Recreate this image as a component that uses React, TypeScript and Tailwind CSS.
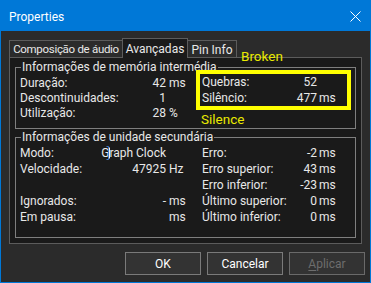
import React from "react";

function LRow({ label, value, unit, h = "h-[16px]" }: { label: string; value: string; unit?: string; h?: string }) {
  return (
    <div className={`flex items-center ${h}`}>
      <div className="flex w-[146px] justify-between">
        <span>{label}</span>
        <span>{value}</span>
      </div>
      {unit !== undefined && <span className="ml-[3px]">{unit}</span>}
    </div>
  );
}

function RRow({ label, value, unit, h = "h-[16px]" }: { label: string; value: string; unit?: string; h?: string }) {
  return (
    <div className={`flex items-center ${h}`}>
      <div className="flex w-[115px] justify-between">
        <span>{label}</span>
        <span>{value}</span>
      </div>
      {unit !== undefined && <span className="ml-[2px]">{unit}</span>}
    </div>
  );
}

export default function App() {
  return (
    <div className="relative flex h-[283px] w-[371px] flex-col border border-[#0078d7] bg-[#2b2b2b] font-[Roboto,'Liberation_Sans',sans-serif] text-[12px] text-[#e8e8e8]">
      {/* Title bar */}
      <div className="flex h-[30px] items-center justify-between bg-[#0078d7] pl-[8px] pr-[9px] text-white">
        <span className="pt-[1px]">Properties</span>
        <svg width="11" height="11" viewBox="0 0 11 11" className="mt-[1px]">
          <path d="M0.5 0.5 L10.5 10.5 M10.5 0.5 L0.5 10.5" stroke="#ffffff" strokeWidth="1" />
        </svg>
      </div>

      {/* Tabs */}
      <div className="flex h-[26px] items-end pl-[8px]">
        <div className="flex h-[17px] w-[114px] items-center justify-center whitespace-nowrap border border-b-0 border-[#5c5c5c] bg-[#2b2b2b] pt-[1px] text-[11.5px] tracking-[-0.3px]">
          Composição de áudio
        </div>
        <div className="relative z-10 -mb-px -ml-px flex h-[20px] w-[66px] items-center justify-center whitespace-nowrap border border-b-0 border-[#5c5c5c] bg-[#1a1a1a]">
          Avançadas
        </div>
        <div className="-ml-px flex h-[17px] w-[50px] items-center justify-center whitespace-nowrap border border-b-0 border-[#5c5c5c] bg-[#2b2b2b] pt-[1px]">
          Pin Info
        </div>
      </div>

      {/* Panel */}
      <div className="ml-[8px] flex h-[187px] w-[353px] flex-col border border-[#5c5c5c] bg-[#1a1a1a] pl-[5px] pt-[1px]">
        {/* Group 1 */}
        <fieldset className="h-[70px] w-[341px] border border-[#7f7f7f] pl-[4px]">
          <legend className="ml-[1px] px-[1px] leading-[16px]">Informações de memória intermédia</legend>
          <div className="flex">
            <div className="w-[176px]">
              <LRow label="Duração:" value="42" unit="ms" h="h-[15px]" />
              <LRow label="Descontinuidades:" value="1" h="h-[15px]" />
              <LRow label="Utilização:" value="28" unit="%" h="h-[15px]" />
            </div>
            <div className="-mt-[5px] flex flex-col">
              <div className="h-[40px] w-[155px] border-[4px] border-[#ffff00] pl-[2px]">
                <RRow label="Quebras:" value="52" />
                <RRow label="Silêncio:" value="477" unit="ms" />
              </div>
              <div className="pl-[5px] text-[13.5px] leading-[18px] text-[#eaea00]">Silence</div>
            </div>
          </div>
        </fieldset>

        {/* Group 2 */}
        <fieldset className="h-[109px] w-[341px] border border-[#7f7f7f] pl-[4px]">
          <legend className="ml-[1px] px-[1px] leading-[16px]">Informações de unidade secundária</legend>
          <div className="flex">
            <div className="relative w-[182px]">
              <LRow label="Modo:" value="Graph Clock" />
              <LRow label="Velocidade:" value="47925" unit="Hz" />
              <div className="h-[16px]" />
              <LRow label="Ignorados:" value="-" unit="ms" />
              <LRow label="Em pausa:" value="" unit="ms" />
              <svg width="5" height="14" viewBox="0 0 5 14" className="absolute left-[86px] top-[1px]">
                <path d="M0.5 0.5 H2.5 M2.5 0.5 V13.5 M0.5 13.5 H2.5" stroke="#3a78d0" strokeWidth="1" fill="none" />
                <path d="M3.5 1.5 V12.5" stroke="#f0f0f0" strokeWidth="1" />
              </svg>
            </div>
            <div>
              <RRow label="Erro:" value="-2" unit="ms" />
              <RRow label="Erro superior:" value="43" unit="ms" />
              <RRow label="Erro inferior:" value="-23" unit="ms" />
              <RRow label="Último superior:" value="0" unit="ms" />
              <RRow label="Último inferior:" value="0" unit="ms" />
            </div>
          </div>
        </fieldset>
      </div>

      {/* Buttons */}
      <div className="mt-[8px] flex justify-end gap-[6px] pr-[5px]">
        <button className="flex h-[23px] w-[76px] items-center justify-center border border-[#7a7a7a] bg-[#333333] text-white">
          OK
        </button>
        <button className="flex h-[23px] w-[76px] items-center justify-center border border-[#7a7a7a] bg-[#333333] text-white">
          Cancelar
        </button>
        <button className="flex h-[23px] w-[76px] items-center justify-center border border-[#6a6a6a] bg-[#333333] text-[#6d6d6d]">
          <span>
            <span className="underline underline-offset-2">A</span>plicar
          </span>
        </button>
      </div>

      {/* Annotation */}
      <div className="absolute left-[240px] top-[46px] text-[13.5px] leading-[18px] text-[#eaea00]">Broken</div>
    </div>
  );
}
